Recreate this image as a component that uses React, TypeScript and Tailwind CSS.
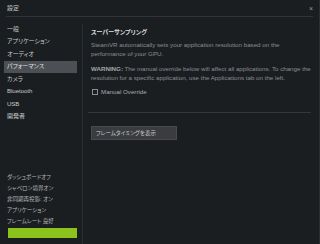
import React from "react";

const jp = "[font-feature-settings:'palt']";

export default function App() {
  const nav = ["一般", "アプリケーション", "オーディオ", "パフォーマンス", "カメラ", "Bluetooth", "USB", "開発者"];
  const status = ["ダッシュボードオフ", "シャペロン境界オン", "非同期再投影: オン", "アプリケーション", "フレームレート 良好"];
  return (
    <div className={`w-[320px] h-[244px] bg-[#1b1e21] text-[#c5c7c9] font-['Liberation_Sans','Noto_Sans_CJK_JP',sans-serif] flex flex-col overflow-hidden border-r border-[#2a2e32] ${jp}`}>
      <div className="h-[17px] mx-[6px] border-b border-[#303438] flex items-center justify-between pl-[1px] pr-[0px] shrink-0">
        <span className="text-[6px] text-[#c8cacc]">設定</span>
        <span className="text-[7px] leading-none text-[#9a9ca0]">×</span>
      </div>
      <div className="flex flex-1 min-h-0">
        <div className="w-[83px] mt-[6px] border-r border-[#2a2d31] flex flex-col justify-between pl-[4px] pr-[5px] pb-[6px] shrink-0">
          <div className="flex flex-col">
            {nav.map((n, i) => (
              <div
                key={n}
                className={`h-[12.5px] flex items-center pl-[3px] text-[6px] ${i === 3 ? "bg-[#4c4f53] text-[#e2e3e4]" : "text-[#c8cacc]"}`}
              >
                {n}
              </div>
            ))}
          </div>
          <div className="flex flex-col">
            {status.map((s) => (
              <div key={s} className="h-[11px] flex items-center pl-[3px] text-[5.5px] text-[#b3b5b8]">
                {s}
              </div>
            ))}
            <div className="h-[10px] mt-[1px] ml-[4px] bg-[#8cc21c]" />
          </div>
        </div>
        <div className="flex-1 flex flex-col pt-[11px]">
          <div className="pl-[8px] h-[9px] flex items-center text-[6px] font-bold text-[#dcdddf]">スーパーサンプリング</div>
          <div className="pl-[8px] mt-[3px] text-[6.2px] leading-[9px] text-[#8a8d91] whitespace-nowrap">
            SteamVR automatically sets your application resolution based on the
            <br />
            performance of your GPU.
          </div>
          <div className="pl-[8px] mt-[6px] text-[6.2px] leading-[9px] text-[#8a8d91] whitespace-nowrap">
            <span className="font-bold text-[#a3a5a8]">WARNING:</span> The manual override below will affect all applications. To change the
            <br />
            resolution for a specific application, use the Applications tab on the left.
          </div>
          <div className="pl-[9px] mt-[5px] h-[9px] flex items-center gap-[3px]">
            <div className="w-[6px] h-[6px] border border-[#8a8d91]" />
            <span className="text-[6.2px] text-[#a9abae]">Manual Override</span>
          </div>
          <div className="ml-[5px] mr-[8px] mt-[16px] h-[1px] bg-[#34383c]" />
          <div className="ml-[8px] mt-[13px] w-[86px] h-[14px] bg-[#3a3c3f] border border-[#484a4d] flex items-center pl-[4px] text-[5.5px] text-[#c8cacc]">
            フレームタイミングを表示
          </div>
        </div>
      </div>
    </div>
  );
}
